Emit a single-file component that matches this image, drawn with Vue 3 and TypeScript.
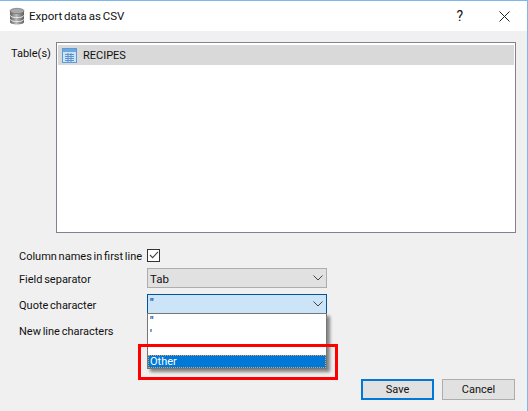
<script setup lang="ts">
const options = ['"', "'", '']
</script>

<template>
  <div class="window">
    <header class="titlebar">
      <svg class="db" width="18" height="18" viewBox="0 0 18 18">
        <defs>
          <linearGradient id="g" x1="0" x2="1" y1="0" y2="0">
            <stop offset="0" stop-color="#5f5f5f" />
            <stop offset=".45" stop-color="#bdbdbd" />
            <stop offset="1" stop-color="#5a5a5a" />
          </linearGradient>
        </defs>
        <path d="M2 4v11c0 1.400 3 2.500 7 2.500s7-1.100 7-2.500V4z" fill="url(#g)" />
        <ellipse cx="9" cy="4" rx="7" ry="2.700" fill="#a8a8a8" stroke="#666" stroke-width=".6" />
        <path d="M2 8c0 1.500 3 2.600 7 2.600s7-1.100 7-2.600M2 12c0 1.500 3 2.600 7 2.600s7-1.100 7-2.600" fill="none" stroke="#eee" stroke-width="1" />
      </svg>
      <span class="title">Export data as CSV</span>
      <span class="help">?</span>
      <svg class="close" width="11" height="11" viewBox="0 0 11 11">
        <path d="M.5.500l10 10M10.500.500l-10 10" stroke="#222" stroke-width="1" fill="none" />
      </svg>
    </header>

    <main class="body">
      <section class="tables">
        <label class="tables-label">Table(s)</label>
        <div class="listbox">
          <div class="list-row">
            <svg class="tbl" width="15" height="15" viewBox="0 0 15 15">
              <rect x=".5" y=".5" width="14" height="14" fill="#cfe3f7" stroke="#5c9bd6" />
              <rect x="1" y="1" width="13" height="3" fill="#6fa8e0" />
              <path d="M3 6.500h9M3 8.500h9M3 10.500h9M3 12.500h9M6 5v9M9 5v9" stroke="#5c93cf" stroke-width="1" fill="none" />
            </svg>
            <span>RECIPES</span>
          </div>
        </div>
      </section>

      <section class="form">
        <span class="lbl">Column names in first line</span>
        <div class="check">
          <svg width="10" height="8" viewBox="0 0 11 9">
            <path d="M1 4.500l3 3 6-6.500" stroke="#444" stroke-width="1.200" fill="none" />
          </svg>
        </div>

        <span class="lbl">Field separator</span>
        <div class="combo">
          <span class="val">Tab</span>
          <svg class="chev" width="10" height="6" viewBox="0 0 10 6"><path d="M.5.500l4.500 4.500 4.500-4.500" stroke="#444" fill="none" /></svg>
        </div>

        <span class="lbl">Quote character</span>
        <div class="combo open">
          <span class="val quote">"</span>
          <svg class="chev" width="10" height="6" viewBox="0 0 10 6"><path d="M.5.500l4.500 4.500 4.500-4.500" stroke="#444" fill="none" /></svg>
          <div class="dropdown">
            <div v-for="o in options" :key="o" class="opt"><span class="quote">{{ o }}</span></div>
            <div class="opt selected">Other</div>
          </div>
          <div class="marker"></div>
        </div>

        <span class="lbl">New line characters</span>
        <div class="combo"></div>
      </section>

      <footer class="actions">
        <button class="btn default">Save</button>
        <button class="btn">Cancel</button>
      </footer>
    </main>
  </div>
</template>

<style>
html, body { margin: 0; background: #f0f0f0; }
</style>

<style scoped>
.window {
  box-sizing: border-box;
  width: 528px;
  height: 411px;
  display: flex;
  flex-direction: column;
  background: #f0f0f0;
  border-top: 1px solid #7db8ec;
  border-right: 1px solid #7db8ec;
  overflow: hidden;
  font-family: Roboto, "Open Sans", sans-serif;
  font-size: 11px;
  word-spacing: -1px;
  color: #111;
}
.titlebar {
  height: 30px;
  flex: none;
  display: flex;
  align-items: center;
  background: #fff;
  padding-left: 8px;
}
.title { margin-left: 3px; flex: 1; font-size: 11.500px; }
.help { font-size: 14px; font-weight: 400; margin-right: 36px; }
.close { margin-right: 17px; }
.body {
  flex: 1;
  display: flex;
  flex-direction: column;
  padding: 11px;
}
.tables { display: flex; height: 191px; }
.tables-label { width: 45px; line-height: 24px; }
.listbox {
  flex: 1;
  background: #fff;
  border: 1px solid #82828e;
  padding: 2px 1px;
}
.list-row {
  height: 20px;
  display: flex;
  align-items: center;
  gap: 6px;
  background: #d9d9d9;
  padding-left: 4px;
}
.form {
  margin-top: 15px;
  display: grid;
  grid-template-columns: 128px 180px;
  grid-template-rows: 14px 20px 20px 20px;
  row-gap: 6px;
  margin-left: 8px;
  align-items: center;
}
.lbl { white-space: nowrap; line-height: 16px; padding-top: 3px; }
.check {
  box-sizing: border-box;
  width: 13px;
  height: 13px;
  border: 1px solid #333;
  background: #fff;
  display: flex;
  align-items: center;
  justify-content: center;
}
.combo {
  position: relative;
  box-sizing: border-box;
  height: 20px;
  border: 1px solid #adadad;
  background: #e1e1e1;
  display: flex;
  align-items: center;
  padding-left: 2px;
}
.combo.open { border-color: #005499; background: #cce4f7; }
.chev { position: absolute; right: 3px; top: 6px; }
.val { line-height: 18px; padding-top: 1px; font-size: 11.500px; }
.quote { color: #1a56a8; font-weight: 700; }
.combo .val.quote { line-height: 12px; align-self: flex-start; margin-top: 1px; padding-top: 0; }
.opt .quote { display: block; line-height: 9px; }
.dropdown {
  position: absolute;
  left: -1px;
  right: -1px;
  top: 18px;
  z-index: 2;
  box-sizing: border-box;
  background: #fff;
  border: 1px solid #767676;
  padding-top: 2px;
  box-shadow: 3px 3px 3px rgba(0, 0, 0, .45);
}
.opt {
  height: 13px;
  line-height: 13px;
  padding-left: 2px;
}
.selected {
  box-sizing: border-box;
  background: #0078d7;
  color: #fff;
  line-height: 14px;
  outline: 1px dotted #d9a15a;
  outline-offset: -1px;
}
.marker {
  position: absolute;
  left: -10px;
  top: 49px;
  width: 194px;
  height: 30px;
  border: 3px solid #f00;
  box-sizing: content-box;
  z-index: 3;
  pointer-events: none;
}
.actions {
  margin-top: auto;
  margin-right: 1px;
  display: flex;
  justify-content: flex-end;
  gap: 8px;
}
.btn {
  box-sizing: border-box;
  width: 73px;
  height: 21px;
  padding: 0;
  border: 1px solid #adadad;
  background: #e1e1e1;
  font: inherit;
  word-spacing: inherit;
  color: #111;
}
.btn.default { border: 2px solid #0078d7; }
</style>
